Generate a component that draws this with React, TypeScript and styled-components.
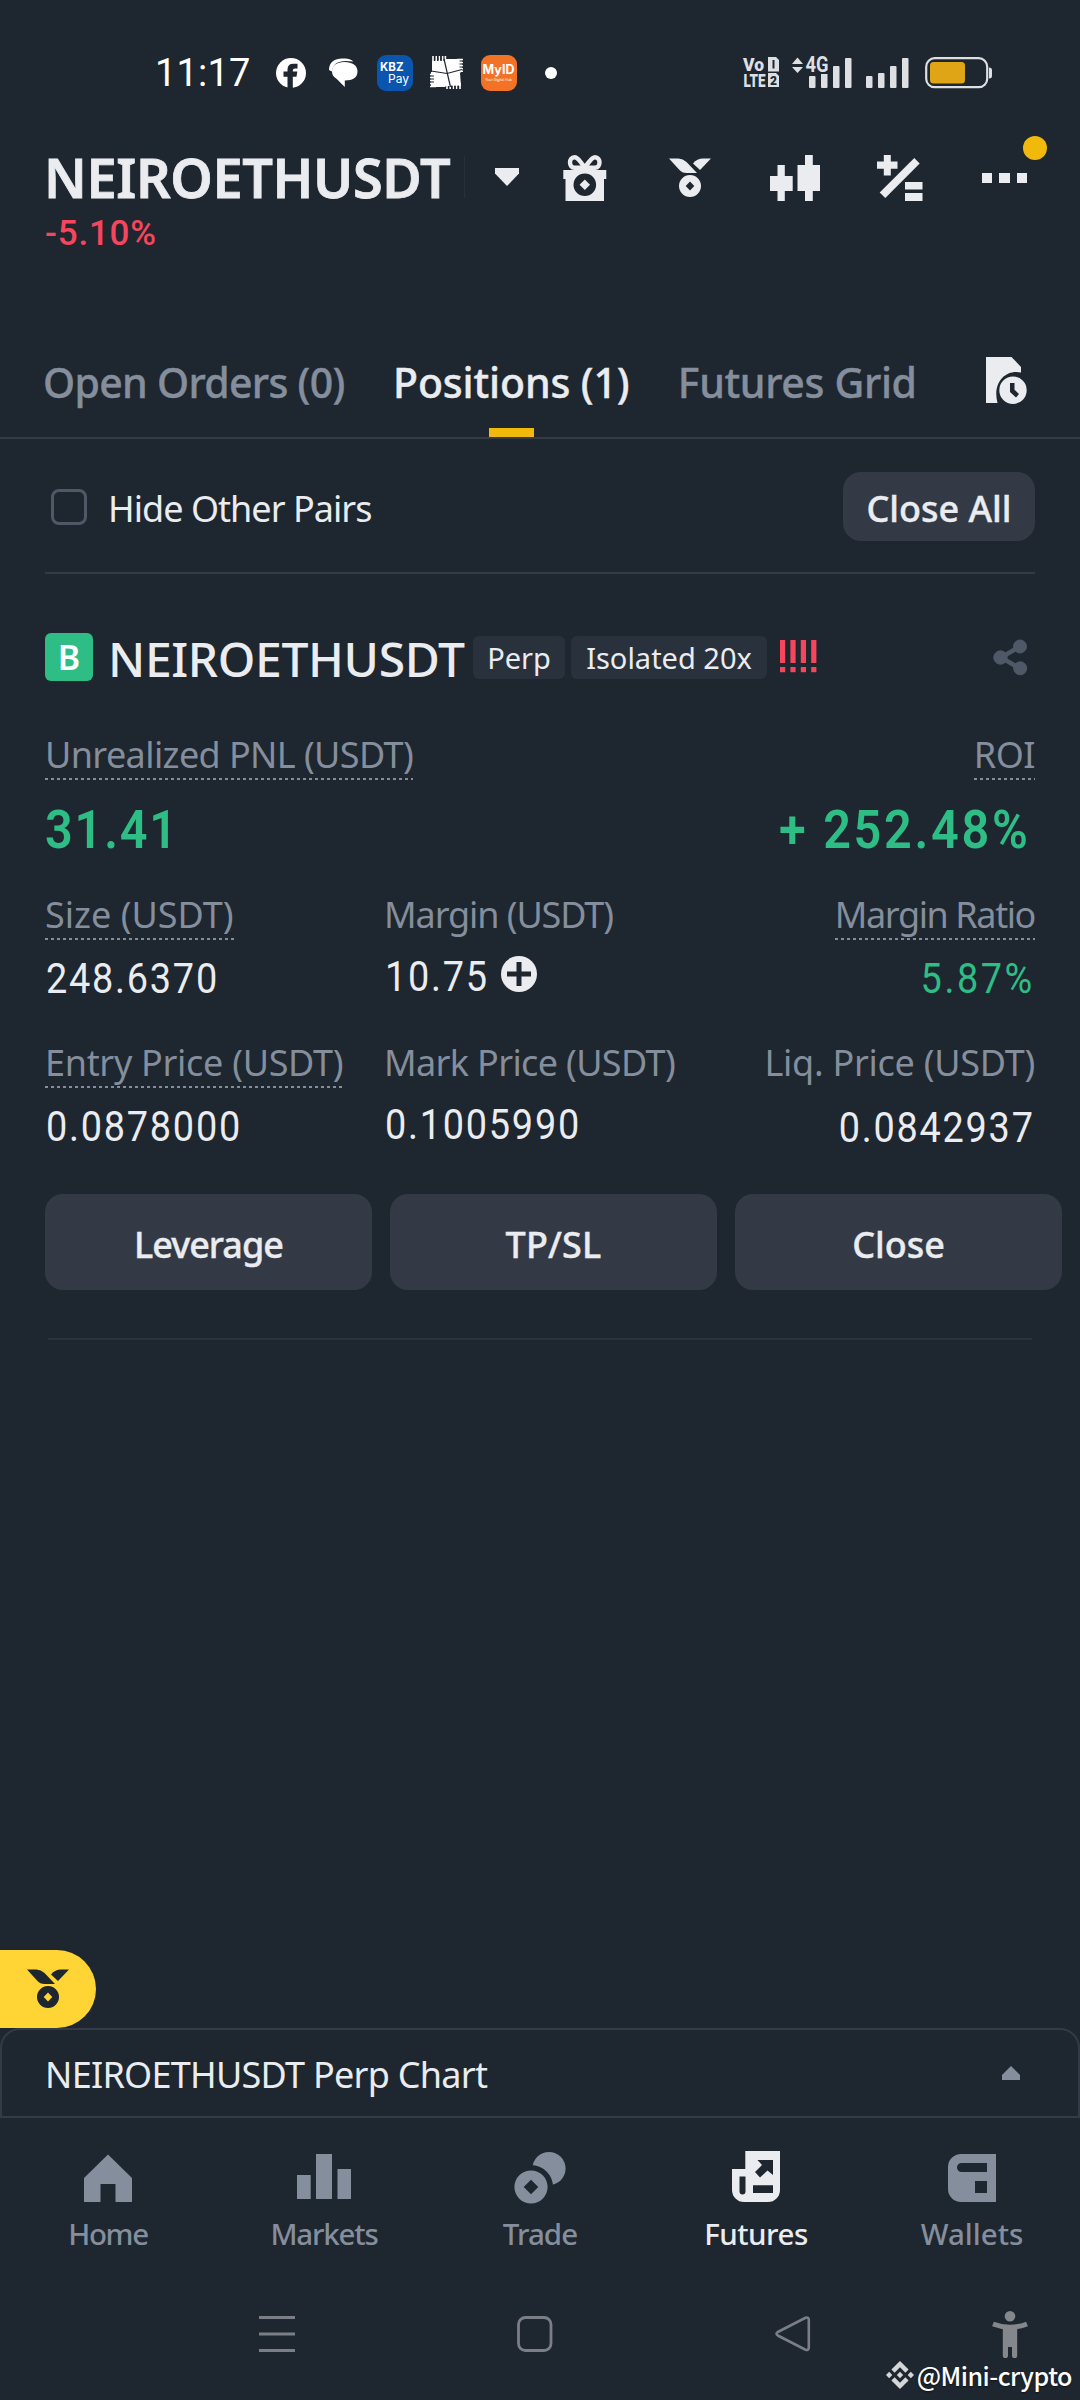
import React from "react";
import styled, { createGlobalStyle } from "styled-components";

const c = {
  bg: "#1e262f",
  line: "#333b47",
  lineSoft: "#2b323f",
  panel: "#333a46",
  chip: "#29313d",
  text: "#eaecef",
  muted: "#848e9c",
  faint: "#4f5867",
  yellow: "#f0b90b",
  green: "#2ebd85",
  red: "#f6465d",
};
const sans = `"Noto Sans", "Open Sans", sans-serif`;
const digits = `Roboto, "Noto Sans", sans-serif`;

const GlobalStyle = createGlobalStyle`
  body { margin: 0; background: ${c.bg}; }
  * { box-sizing: border-box; }
  svg { display: block; flex: none; overflow: visible; }
  button { border: 0; font: inherit; color: inherit; }
`;

const Screen = styled.div`
  position: relative;
  display: flex;
  flex-direction: column;
  width: 1080px;
  height: 2400px;
  overflow: hidden;
  background: ${c.bg};
  color: ${c.text};
  font-family: ${sans};
  white-space: nowrap;
`;

/* ---------- status bar ---------- */
const StatusBar = styled.div`
  display: flex;
  align-items: center;
  height: 145px;
  padding: 0 87px 0 155px;
`;
const Clock = styled.div`
  width: 121px;
  font: 400 38px/46px ${digits};
  letter-spacing: 0.2px;
  color: #fff;
`;
const AppIcons = styled.div`
  display: flex;
  align-items: center;
  flex: 1;
`;
const AppIcon = styled.div<{ $gap: number }>`
  margin-left: ${(p) => p.$gap}px;
`;
const AppTile = styled.div<{ $bg: string; $gap: number }>`
  display: flex;
  flex-direction: column;
  align-items: center;
  justify-content: center;
  width: 36px;
  height: 36px;
  margin-left: ${(p) => p.$gap}px;
  border-radius: 9px;
  background: ${(p) => p.$bg};
  color: #fff;
`;
const TileText = styled.span<{ $size: number; $weight: number; $lh: number; $align?: string }>`
  font: ${(p) => p.$weight} ${(p) => p.$size}px/${(p) => p.$lh}px Inter, sans-serif;
  align-self: ${(p) => p.$align || "center"};
  padding: 0 4px 0 3px;
`;
const MoreDot = styled.div`
  width: 12px;
  height: 12px;
  margin-left: 28px;
  border-radius: 50%;
  background: #fff;
`;
const Radio = styled.div`
  display: flex;
  align-items: center;
`;

/* ---------- header ---------- */
const Header = styled.header`
  height: 182px;
  padding: 2px 0 0 43px;
`;
const HeaderRow = styled.div`
  display: flex;
  align-items: center;
  height: 60px;
`;
const Title = styled.h1`
  width: 421px;
  margin: 0;
  padding-left: 1px;
  font-size: 54px;
  font-weight: 600;
  line-height: 62px;
  letter-spacing: -0.35px;
  -webkit-text-stroke: 0.8px ${c.text};
`;
const Rule = styled.div`
  width: 1px;
  height: 42px;
  margin-right: 30px;
  background: #28303b;
`;
const HeaderIcons = styled.div`
  display: grid;
  grid-template-columns: repeat(5, 105px);
  place-items: center;
  height: 60px;
  margin-left: 13px;
  padding-top: 2px;
`;
const More = styled.div`
  position: relative;
  display: flex;
  gap: 7px;
`;
const Square = styled.i`
  width: 10.5px;
  height: 10px;
  background: ${c.text};
`;
const Notice = styled.i`
  position: absolute;
  right: -20px;
  top: -37px;
  width: 24px;
  height: 24px;
  border-radius: 50%;
  background: ${c.yellow};
`;
const Change = styled.div`
  padding: 2px 0 0 2px;
  font: 500 35px/50px ${digits};
  letter-spacing: 0.8px;
  color: ${c.red};
`;

/* ---------- order tabs ---------- */
const Tabs = styled.nav`
  display: flex;
  align-items: stretch;
  gap: 48.5px;
  height: 112px;
  padding: 0 53px 0 43px;
  border-bottom: 2px solid ${c.line};
`;
const Tab = styled.div<{ $active?: boolean; $track: number }>`
  position: relative;
  font-size: 41px;
  font-weight: 500;
  line-height: 111px;
  letter-spacing: ${(p) => p.$track}px;
  -webkit-text-stroke: 0.4px currentColor;
  color: ${(p) => (p.$active ? c.text : c.muted)};
  &::after {
    content: "";
    display: ${(p) => (p.$active ? "block" : "none")};
    position: absolute;
    left: calc(50% - 22px);
    bottom: 0;
    width: 45px;
    height: 9px;
    background: ${c.yellow};
  }
`;
const TabHistory = styled.div`
  margin: 30px 0 0 auto;
`;

/* ---------- filter row ---------- */
const Filter = styled.div`
  display: flex;
  align-items: center;
  height: 135px;
  margin: 0 45px;
  padding: 2px 0 0 6px;
  border-bottom: 2px solid ${c.line};
`;
const Checkbox = styled.div`
  width: 36px;
  height: 36px;
  border: 3px solid ${c.faint};
  border-radius: 8px;
`;
const FilterLabel = styled.div`
  flex: 1;
  padding: 5px 0 0 21px;
  font-size: 36px;
  line-height: 46px;
  letter-spacing: -0.97px;
`;
const PlainButton = styled.button<{ $w: number; $h: number; $track: number }>`
  display: flex;
  align-items: center;
  justify-content: center;
  flex: none;
  width: ${(p) => p.$w}px;
  height: ${(p) => p.$h}px;
  padding: 4px 0 0;
  border-radius: 18px;
  background: ${c.panel};
  font-size: 36px;
  font-weight: 500;
  letter-spacing: ${(p) => p.$track}px;
  -webkit-text-stroke: 0.4px currentColor;
`;

/* ---------- position card ---------- */
const Card = styled.section`
  display: flex;
  flex-direction: column;
  padding: 53px 45px 0;
`;
const CardHead = styled.div`
  display: flex;
  align-items: center;
  height: 60px;
`;
const Side = styled.div`
  width: 48px;
  height: 48px;
  margin-right: 15px;
  border-radius: 6px;
  background: ${c.green};
  color: #fff;
  font-size: 34px;
  font-weight: 600;
  line-height: 48px;
  text-align: center;
`;
const Pair = styled.h2`
  width: 365px;
  margin: 0;
  padding-top: 3px;
  font-size: 48px;
  font-weight: 500;
  line-height: 57px;
  letter-spacing: -0.37px;
`;
const Chip = styled.div<{ $w: number }>`
  width: ${(p) => p.$w}px;
  height: 43px;
  margin-right: 6px;
  border-radius: 6px;
  background: ${c.chip};
  font-size: 29px;
  line-height: 43px;
  text-align: center;
`;
const Risk = styled.div`
  flex: 1;
  padding-left: 6.5px;
`;
const Share = styled.div`
  padding-right: 7px;
`;
const Label = styled.div<{ $hint?: boolean; $track?: number }>`
  width: max-content;
  height: 49px;
  font-size: 36px;
  line-height: 47px;
  letter-spacing: ${(p) => p.$track ?? 0}px;
  color: ${c.muted};
  background: ${(p) =>
    p.$hint
      ? `repeating-linear-gradient(90deg, ${c.muted} 0 3px, transparent 3px 6px) left bottom / 100% 2px no-repeat`
      : "none"};
`;
const Metric = styled.div<{ $end?: boolean }>`
  display: flex;
  flex-direction: column;
  align-items: ${(p) => (p.$end ? "flex-end" : "flex-start")};
`;
const Summary = styled.div`
  display: flex;
  justify-content: space-between;
  margin-top: 44px;
`;
const Big = styled.div<{ $track: number; $end?: boolean }>`
  margin: 15px ${(p) => (p.$end ? 4 : 0)}px 0 0;
  font: 650 54px/70px ${digits};
  letter-spacing: ${(p) => p.$track}px;
  color: ${c.green};
  transform: scaleX(0.9);
  transform-origin: ${(p) => (p.$end ? "right" : "left")};
`;
const Metrics = styled.div`
  display: grid;
  grid-template-columns: 339px 300px 1fr;
  row-gap: 35px;
  margin-top: 26px;
`;
const ValueRow = styled.div<{ $shift?: number }>`
  display: flex;
  align-items: center;
  height: 50px;
  margin: ${(p) => 13 + (p.$shift || 0)}px 0 ${(p) => 1 - (p.$shift || 0)}px;
`;
const Value = styled.span<{ $up?: boolean; $end?: boolean; $track?: number }>`
  font: 420 43px/50px ${digits};
  letter-spacing: ${(p) => p.$track ?? 2}px;
  color: ${(p) => (p.$up ? c.green : c.text)};
  transform: ${(p) => (p.$end ? "none" : "translateX(1px)")} scaleX(0.88);
  transform: scaleX(0.88);
  transform-origin: ${(p) => (p.$end ? "right" : "left")};
  margin-left: ${(p) => (p.$end ? 0 : 1)}px;
`;
const AddMargin = styled.span`
  margin: -4px 0 0 -2px;
`;
const Actions = styled.div`
  display: flex;
  gap: 18px;
  margin: 42px -27px 0 0;
`;
const CardEnd = styled.div`
  height: 2px;
  margin: 48px 3px 0;
  background: ${c.lineSoft};
`;

/* ---------- bottom ---------- */
const Fab = styled.div`
  display: flex;
  align-items: center;
  width: 96px;
  height: 78px;
  margin-top: auto;
  padding-left: 27px;
  border-radius: 0 39px 39px 0;
  background: #ffd535;
  color: ${c.bg};
`;
const ChartBar = styled.div`
  display: flex;
  align-items: center;
  justify-content: space-between;
  height: 90px;
  padding: 0 58px 0 43px;
  border: 2px solid ${c.line};
  border-radius: 20px 20px 0 0;
`;
const ChartName = styled.div`
  padding-top: 4px;
  font-size: 36px;
  line-height: 46px;
  letter-spacing: -0.73px;
`;
const BottomNav = styled.nav`
  display: grid;
  grid-template-columns: repeat(5, 216px);
  height: 193px;
  padding-top: 33px;
`;
const NavItem = styled.div<{ $active?: boolean; $track: number }>`
  display: flex;
  flex-direction: column;
  align-items: center;
  gap: 9px;
  font-size: 29.5px;
  font-weight: 500;
  line-height: 40px;
  letter-spacing: ${(p) => p.$track}px;
  color: ${(p) => (p.$active ? c.text : c.muted)};
`;
const SystemNav = styled.div`
  display: flex;
  align-items: center;
  gap: 222px;
  height: 89px;
  padding: 0 52px 43px 259px;
  color: #7b7e85;
`;
const Person = styled.div`
  margin: 2px 0 0 -41px;
  color: #84878b;
`;
const Watermark = styled.div`
  position: absolute;
  right: 8px;
  bottom: 7px;
  display: flex;
  align-items: center;
  gap: 3px;
  height: 36px;
  font: 500 25px/36px "Noto Sans CJK SC", sans-serif;
  letter-spacing: -0.5px;
  color: #fff;
  text-shadow: 0 1px 2px rgba(0, 0, 0, 0.5);
`;

const Medal = () => (
  <svg width="42" height="40" viewBox="0 0 42 40" fill="currentColor">
    <path d="M0 .5H9.500Q14 .7 17.500 4L28 15H17.500Q13 15 10 11.500Z" />
    <path d="M24 5.500Q28 .5 34 .5H42L31 12Z" />
    <path fillRule="evenodd" d="M21 17a11 11 0 1 1 0 22a11 11 0 1 1 0-22ZM21 23.500L16.700 28L21 32.500L25.300 28Z" />
  </svg>
);

const FacebookIcon = () => (
  <svg width="30" height="30" viewBox="0 0 30 30">
    <circle cx="15" cy="15" r="15" fill="#fff" />
    <path fill={c.bg} d="M11.500 30V18.700H7.500V13.600H11.500V11.500Q11.500 5.800 17.200 5.800H21.500V10.600H19Q16.800 10.600 16.800 12.500V13.600H21.300L20.500 18.700H16.800V30Z" />
  </svg>
);

const MessageIcon = () => (
  <svg width="29" height="30" viewBox="0 0 29 30" fill="#fff">
    <path d="M0 12C0 4 6 .5 13 .5C18 .5 22 1 24.500 3.500C10 1.500 4.500 4.500 2.800 13.500Z" />
    <path d="M15.500 4C23.500 4 28.500 7.500 28.500 13.500C28.500 19.500 24 22.500 15.800 22.500V29L7.500 20.800C4.500 19 3 16.700 3 13.500C3 7.500 7.500 4 15.500 4Z" />
  </svg>
);

const WeaveIcon = () => (
  <svg width="34" height="34" viewBox="0 0 34 34">
    <path fill="#fff" d="M2 5H15L16 3H32V15L30 17L31 30H16L15 31H1V16H2Z" />
    <g stroke="#fff" strokeWidth="1.600">
      <path d="M3 0V6M6.200 0V6M9.400 0V6M12.600 0V6M15.400 0V6" />
      <path d="M17 33V27M20.200 33V27M23.400 33V27M26.600 33V27M30 33V27" />
      <path d="M0 18.500H6M0 21.500H6M0 24.500H6M0 27.500H6M0 30.500H6" />
      <path d="M27 3.600H33M27 6.600H33M27 9.600H33M27 12.600H33M27 15.200H33" />
    </g>
    <path fill="none" stroke={c.bg} strokeWidth="1.200" d="M14 3L17 16L20.500 31M1 15L17 17.500L32 13.500" />
    <path fill="none" stroke={c.bg} strokeWidth="1.200" d="M4.600 0V4M7.800 0V4M11 0V4M1 20H4M1 23H4M1 26H4M29.500 5H33M29.500 8H33M29.500 11H33M21.800 33V29.500M25 33V29.500M28.300 33V29.500" />
  </svg>
);

const VolteIcon = () => (
  <svg width="37" height="31" viewBox="0 0 37 31" fill="#dddfe3" fontFamily="Roboto, sans-serif" fontWeight="900" fontSize="19">
    <text x="0" y="14" textLength="21" lengthAdjust="spacingAndGlyphs">Vo</text>
    <text x="0.500" y="30" textLength="22" lengthAdjust="spacingAndGlyphs">LTE</text>
    <path fillRule="evenodd" d="M25 0H33L36 3V14.500H25ZM29.500 3V11.500H31.500V3Z" />
    <path d="M25 16H33L36 19V30H25Z" />
    <text x="27" y="28" fontSize="13" fill={c.bg} textLength="7" lengthAdjust="spacingAndGlyphs">2</text>
  </svg>
);

const Bars = ({ x }: { x: number }) => (
  <>
    {[12, 15, 22, 30].map((h, i) => (
      <rect key={i} x={x + i * 12} y={33 - h} width="6.500" height={h} rx="1" />
    ))}
  </>
);

const SignalIcon = () => (
  <svg width="118" height="35" viewBox="0 0 118 35" fill="#dddfe3">
    <path d="M0 9L5.500 2.500L11 9ZM0 12H11L5.500 18Z" />
    <Bars x={17} />
    <rect x="12" y="0" width="27" height="19" fill={c.bg} />
    <text x="13.500" y="17" textLength="23" lengthAdjust="spacingAndGlyphs" fontFamily="Roboto, sans-serif" fontWeight="700" fontSize="22.500">4G</text>
    <Bars x={74} />
  </svg>
);

const BatteryIcon = () => (
  <svg width="68" height="32" viewBox="0 0 68 32">
    <rect x="1.200" y="1.200" width="61" height="29" rx="8.500" fill="none" stroke="#dddfe3" strokeWidth="2.200" />
    <rect x="5" y="5" width="35" height="21.500" rx="3.500" fill="#dfa516" />
    <path d="M64 10.500Q67 10.500 67 13V19Q67 21.500 64 21.500Z" fill="#dddfe3" />
  </svg>
);

const GiftIcon = () => (
  <svg width="44" height="46" viewBox="0 0 44 46" fill={c.text}>
    <path fillRule="evenodd" d="M.3 15H43.300V24H41V46H2.500V24H.3ZM21.800 18.500a11.300 11.300 0 1 0 0 22.600a11.300 11.300 0 1 0 0-22.600Z" />
    <path d="M21.800 24.500L27 29.800L21.800 35L16.600 29.800Z" />
    <path d="M21.800 12C17.500 8 15.500 2.200 11.500 2.200C5.500 2.200 5.500 12.700 11.500 12.700H32C38 12.700 38 2.200 32 2.200C28 2.200 26 8 21.800 12Z" fill="none" stroke={c.text} strokeWidth="4.400" />
  </svg>
);

const CandleIcon = () => (
  <svg width="50" height="46" viewBox="0 0 50 46" fill={c.text}>
    <path d="M7.500 10H14.800V21H22.700V36H14.800V46H7.500V36H0V21H7.500Z" />
    <path d="M35 0H42.800V10H50V36H42.800V46H35V36H27.500V10H35Z" />
  </svg>
);

const PercentIcon = () => (
  <svg width="46" height="46" viewBox="0 0 46 46" fill={c.text}>
    <path d="M6.800 0H13.800V6.500H20.500V13.800H13.800V20.500H6.800V13.800H0V6.500H6.800Z" />
    <path d="M37.300 3L42.700 8.400L8.300 43L2.700 37.500Z" />
    <path d="M28 27H45.500V34.500H28ZM28 38H45.500V46H28Z" />
  </svg>
);

const HistoryIcon = () => (
  <svg width="41" height="47" viewBox="0 0 41 47" fill={c.text}>
    <path d="M0 0H25.500L35 10V15.500C20 12 6 25 11.500 46H0Z" />
    <path fillRule="evenodd" d="M27 19.500a13.700 13.700 0 1 1 0 27.400a13.700 13.700 0 1 1 0-27.400ZM24 26V35L30 40.500L33 37L28.500 32.800V26Z" />
  </svg>
);

const ShareIcon = () => (
  <svg width="35" height="37" viewBox="0 0 35 37" fill={c.faint} stroke={c.faint}>
    <path d="M27 7.500L8 18.500L27 29.500" fill="none" strokeWidth="4.500" />
    <circle cx="27" cy="7.500" r="6.500" />
    <circle cx="27.200" cy="29.300" r="6.500" />
    <circle cx="7.500" cy="18.500" r="6.700" />
  </svg>
);

const navItems = [
  { name: "Home", track: -1.4, icon: <path d="M27 3.500L51 27V51H34.500V33H19.500V51H3V27Z" /> },
  { name: "Markets", track: -1.2, icon: <path d="M0 24H13.700V48H0ZM19 3H35V48H19ZM40.500 18H54V48H40.500Z" /> },
  {
    name: "Trade",
    track: -0.9,
    icon: (
      <>
        <circle cx="36" cy="17.500" r="16.600" />
        <circle cx="18" cy="36" r="22" fill={c.bg} />
        <path fillRule="evenodd" d="M18 19.400a16.600 16.600 0 1 1 0 33.200a16.600 16.600 0 1 1 0-33.200ZM18 28.700L10.700 36L18 43.300L25.300 36Z" />
      </>
    ),
  },
  {
    name: "Futures",
    track: -0.5,
    active: true,
    icon: (
      <path fillRule="evenodd" d="M16.300 0H51V39A12 12 0 0 1 39 51H15A12 12 0 0 1 3 39V18H16.300ZM10.500 25.500V40.500A3 3 0 0 0 16.500 40.500V25.500ZM24 34.300H44V42H24ZM28.500 9H44V24L38.500 19.500L31 26.500L26 21L33 14Z" />
    ),
  },
  {
    name: "Wallets",
    track: 0,
    icon: (
      <path fillRule="evenodd" d="M16 3H51V51H16A13 13 0 0 1 3 38V16A13 13 0 0 1 16 3ZM42 12H16.500A4.500 4.500 0 0 0 16.500 21H42ZM30 30H42V42H30Z" />
    ),
  },
];

export default function App() {
  return (
    <Screen>
      <GlobalStyle />
      <StatusBar>
        <Clock>11:17</Clock>
        <AppIcons>
          <AppIcon $gap={0}><FacebookIcon /></AppIcon>
          <AppIcon $gap={23}><MessageIcon /></AppIcon>
          <AppTile $bg="#0a55ad" $gap={19}>
            <TileText $size={11.5} $weight={700} $lh={11} $align="flex-start">KBZ</TileText>
            <TileText $size={12} $weight={400} $lh={11} $align="flex-end">Pay</TileText>
          </AppTile>
          <AppIcon $gap={17}><WeaveIcon /></AppIcon>
          <AppTile $bg="#f27326" $gap={17}>
            <TileText $size={12.5} $weight={700} $lh={14}>MyID</TileText>
            <TileText $size={3.5} $weight={400} $lh={6}>Your Digital Hub</TileText>
          </AppTile>
          <MoreDot />
        </AppIcons>
        <Radio>
          <VolteIcon />
          <AppIcon $gap={12}><SignalIcon /></AppIcon>
          <AppIcon $gap={15}><BatteryIcon /></AppIcon>
        </Radio>
      </StatusBar>

      <Header>
        <HeaderRow>
          <Title>NEIROETHUSDT</Title>
          <Rule />
          <svg width="24" height="18" viewBox="0 0 24 18" fill={c.text}><path d="M0 0H24V5.500L12 18L0 5.500Z" /></svg>
          <HeaderIcons>
            <GiftIcon />
            <Medal />
            <CandleIcon />
            <PercentIcon />
            <More><Square /><Square /><Square /><Notice /></More>
          </HeaderIcons>
        </HeaderRow>
        <Change>-5.10%</Change>
      </Header>

      <Tabs>
        <Tab $track={-0.7}>Open Orders (0)</Tab>
        <Tab $active $track={-0.15}>Positions (1)</Tab>
        <Tab $track={-0.35}>Futures Grid</Tab>
        <TabHistory><HistoryIcon /></TabHistory>
      </Tabs>

      <Filter>
        <Checkbox />
        <FilterLabel>Hide Other Pairs</FilterLabel>
        <PlainButton $w={192} $h={69} $track={0}>Close All</PlainButton>
      </Filter>

      <Card>
        <CardHead>
          <Side>B</Side>
          <Pair>NEIROETHUSDT</Pair>
          <Chip $w={92}>Perp</Chip>
          <Chip $w={196}>Isolated 20x</Chip>
          <Risk>
            <svg width="37" height="34" viewBox="0 0 37 34" fill={c.red}>
              {[0, 10.4, 20.8, 31.2].map((x) => (
                <path key={x} d={`M${x} 0h5.200v23h-5.200zM${x} 27h5.200v5.200h-5.200z`} />
              ))}
            </svg>
          </Risk>
          <Share><ShareIcon /></Share>
        </CardHead>

        <Summary>
          <Metric>
            <Label $hint $track={-0.6}>Unrealized PNL (USDT)</Label>
            <Big $track={2}>31.41</Big>
          </Metric>
          <Metric $end>
            <Label $hint $track={-0.5}>ROI</Label>
            <Big $end $track={3}>+ 252.48%</Big>
          </Metric>
        </Summary>

        <Metrics>
          <Metric>
            <Label $hint>Size (USDT)</Label>
            <ValueRow><Value>248.6370</Value></ValueRow>
          </Metric>
          <Metric>
            <Label $track={-1.1}>Margin (USDT)</Label>
            <ValueRow $shift={-2}>
              <Value>10.75</Value>
              <AddMargin>
                <svg width="36" height="36" viewBox="0 0 36 36">
                  <circle cx="18" cy="18" r="18" fill={c.text} />
                  <path d="M18 6V30M6 18H30" stroke={c.bg} strokeWidth="5" />
                </svg>
              </AddMargin>
            </ValueRow>
          </Metric>
          <Metric $end>
            <Label $hint $track={-1.4}>Margin Ratio</Label>
            <ValueRow><Value $up $end $track={2.9}>5.87%</Value></ValueRow>
          </Metric>
          <Metric>
            <Label $hint $track={-0.3}>Entry Price (USDT)</Label>
            <ValueRow><Value>0.0878000</Value></ValueRow>
          </Metric>
          <Metric>
            <Label $track={-0.65}>Mark Price (USDT)</Label>
            <ValueRow $shift={-2}><Value>0.1005990</Value></ValueRow>
          </Metric>
          <Metric $end>
            <Label $track={-0.27}>Liq. Price (USDT)</Label>
            <ValueRow $shift={1}><Value $end>0.0842937</Value></ValueRow>
          </Metric>
        </Metrics>

        <Actions>
          <PlainButton $w={327} $h={96} $track={-1}>Leverage</PlainButton>
          <PlainButton $w={327} $h={96} $track={0.2}>TP/SL</PlainButton>
          <PlainButton $w={327} $h={96} $track={0}>Close</PlainButton>
        </Actions>
        <CardEnd />
      </Card>

      <Fab><Medal /></Fab>
      <ChartBar>
        <ChartName>NEIROETHUSDT Perp Chart</ChartName>
        <svg width="18" height="14" viewBox="0 0 18 14" fill={c.muted}><path d="M0 14V9L9 0L18 9V14Z" /></svg>
      </ChartBar>
      <BottomNav>
        {navItems.map((n) => (
          <NavItem key={n.name} $active={n.active} $track={n.track}>
            <svg width="54" height="54" viewBox="0 0 54 54" fill="currentColor">{n.icon}</svg>
            {n.name}
          </NavItem>
        ))}
      </BottomNav>
      <SystemNav>
        <svg width="36" height="36" viewBox="0 0 36 36" stroke="currentColor" strokeWidth="3">
          <path d="M0 1.500H36M0 18H36M0 34.500H36" />
        </svg>
        <svg width="36" height="36" viewBox="0 0 36 36" fill="none" stroke="currentColor" strokeWidth="2.800">
          <rect x="1.500" y="1.500" width="32.500" height="33" rx="7" />
        </svg>
        <svg width="36" height="36" viewBox="0 0 36 36" fill="none" stroke="currentColor" strokeWidth="2.600">
          <path d="M2.800 16L30.500 1.800Q33.800 .8 33.800 4V31.500Q33.800 34.700 30.500 33.700L2.800 19.500Q.2 17.800 2.800 16Z" />
        </svg>
        <Person>
          <svg width="36" height="48" viewBox="0 0 36 48" fill="currentColor">
            <circle cx="18" cy="5.300" r="5.300" />
            <path d="M1 13Q18 19.500 35 13" fill="none" stroke="currentColor" strokeWidth="5" />
            <path d="M10.800 15H25.200V44.500A2.600 2.600 0 0 1 20 44.500V36H16V44.500A2.600 2.600 0 0 1 10.800 44.500Z" />
          </svg>
        </Person>
      </SystemNav>
      <Watermark>
        <svg width="28" height="28" viewBox="0 0 24 24" fill="#d5d6d8">
          <path d="M16.624 13.920L19.342 16.636L11.989 23.989L4.636 16.637L7.353 13.920L11.989 18.580ZM21.261 9.284L24 12L21.285 14.716L18.568 12ZM11.989 9.285L14.705 11.976L11.989 14.693L9.272 12ZM2.716 9.284L5.409 12L2.717 14.692L0 12ZM11.989 .012L19.342 7.341L16.624 10.056L11.989 5.420L7.353 10.080L4.636 7.364Z" />
        </svg>
        @Mini-crypto
      </Watermark>
    </Screen>
  );
}
